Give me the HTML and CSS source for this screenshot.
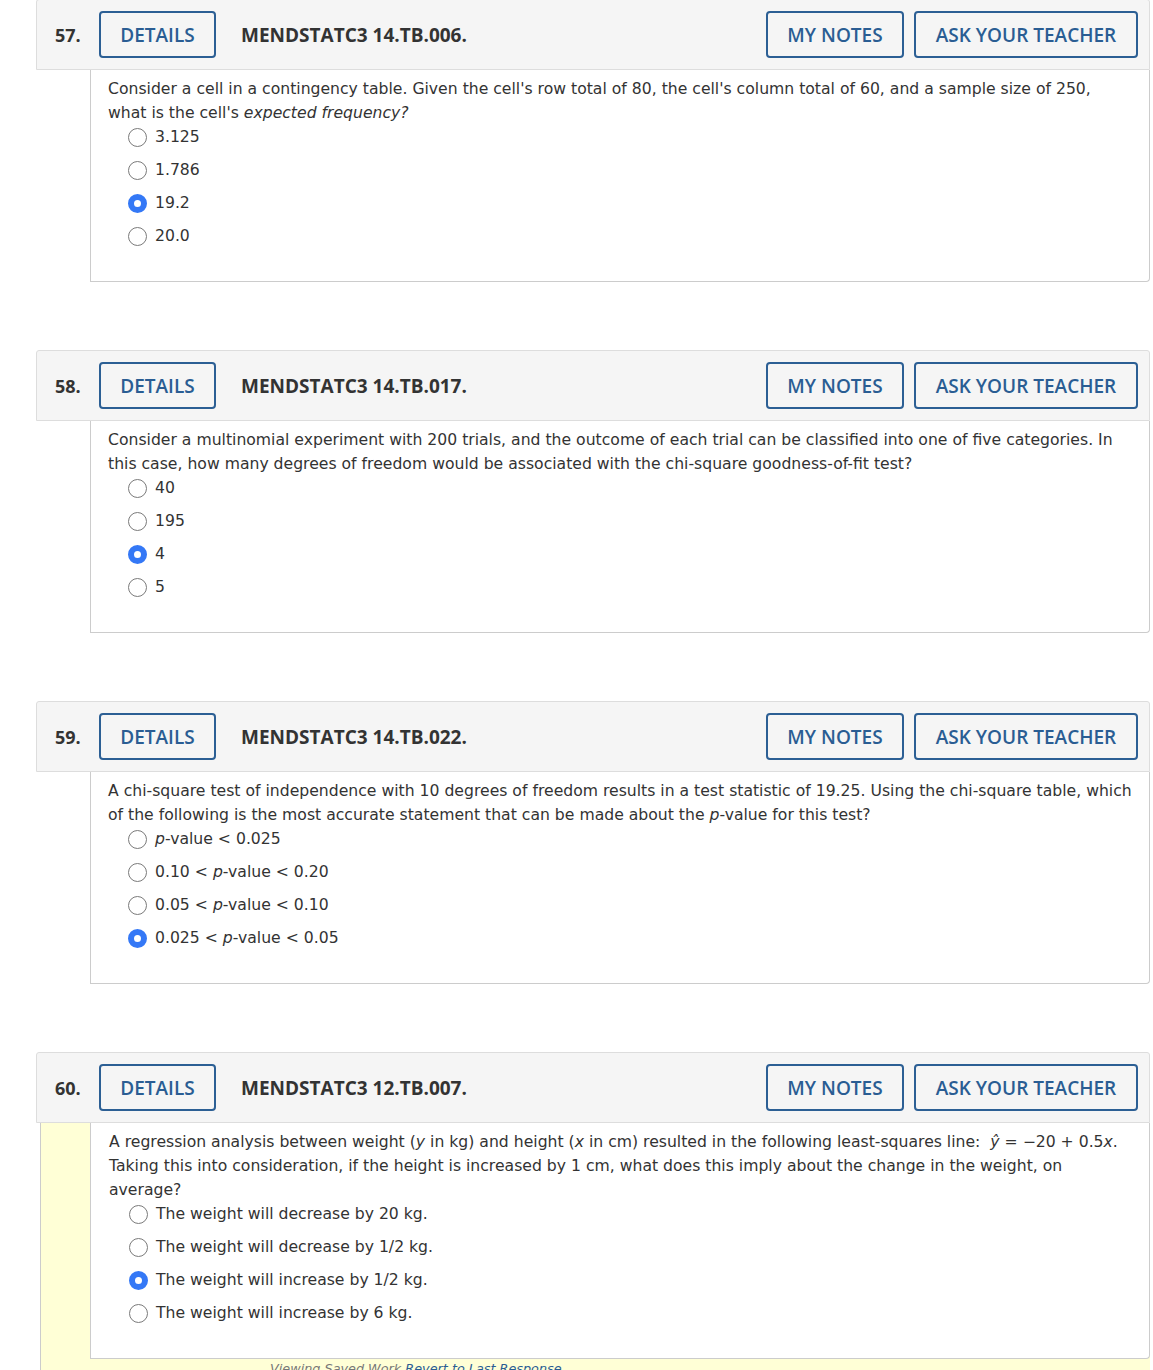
FILE: index.html
```html
<!DOCTYPE html>
<html>
<head>
<meta charset="utf-8">
<link rel="stylesheet" href="styles.css">
</head>
<body>
<div class="page">

  <section class="question">
    <div class="q-head">
      <span class="q-num">57.</span>
      <button class="btn btn-details">DETAILS</button>
      <span class="q-title">MENDSTATC3 14.TB.006.</span>
      <span class="spacer"></span>
      <button class="btn btn-notes">MY NOTES</button>
      <button class="btn btn-ask">ASK YOUR TEACHER</button>
    </div>
    <div class="q-body">
      <p class="q-text">Consider a cell in a contingency table. Given the cell's row total of 80, the cell's column total of 60, and a sample size of 250, what is the cell's <i>expected frequency?</i></p>
      <ul class="opts">
        <li><span class="radio"></span>3.125</li>
        <li><span class="radio"></span>1.786</li>
        <li><span class="radio checked"></span>19.2</li>
        <li><span class="radio"></span>20.0</li>
      </ul>
    </div>
  </section>

  <section class="question">
    <div class="q-head">
      <span class="q-num">58.</span>
      <button class="btn btn-details">DETAILS</button>
      <span class="q-title">MENDSTATC3 14.TB.017.</span>
      <span class="spacer"></span>
      <button class="btn btn-notes">MY NOTES</button>
      <button class="btn btn-ask">ASK YOUR TEACHER</button>
    </div>
    <div class="q-body">
      <p class="q-text">Consider a multinomial experiment with 200 trials, and the outcome of each trial can be classified into one of five categories. In this case, how many degrees of freedom would be associated with the chi-square goodness-of-fit test?</p>
      <ul class="opts">
        <li><span class="radio"></span>40</li>
        <li><span class="radio"></span>195</li>
        <li><span class="radio checked"></span>4</li>
        <li><span class="radio"></span>5</li>
      </ul>
    </div>
  </section>

  <section class="question">
    <div class="q-head">
      <span class="q-num">59.</span>
      <button class="btn btn-details">DETAILS</button>
      <span class="q-title">MENDSTATC3 14.TB.022.</span>
      <span class="spacer"></span>
      <button class="btn btn-notes">MY NOTES</button>
      <button class="btn btn-ask">ASK YOUR TEACHER</button>
    </div>
    <div class="q-body">
      <p class="q-text">A chi-square test of independence with 10 degrees of freedom results in a test statistic of 19.25. Using the chi-square table, which of the following is the most accurate statement that can be made about the <i>p</i>-value for this test?</p>
      <ul class="opts">
        <li><span class="radio"></span><i>p</i>-value &lt; 0.025</li>
        <li><span class="radio"></span>0.10 &lt;&nbsp;<i>p</i>-value &lt; 0.20</li>
        <li><span class="radio"></span>0.05 &lt;&nbsp;<i>p</i>-value &lt; 0.10</li>
        <li><span class="radio checked"></span>0.025 &lt;&nbsp;<i>p</i>-value &lt; 0.05</li>
      </ul>
    </div>
  </section>

  <section class="question">
    <div class="q-head">
      <span class="q-num">60.</span>
      <button class="btn btn-details">DETAILS</button>
      <span class="q-title">MENDSTATC3 12.TB.007.</span>
      <span class="spacer"></span>
      <button class="btn btn-notes">MY NOTES</button>
      <button class="btn btn-ask">ASK YOUR TEACHER</button>
    </div>
    <div class="saved">
      <div class="q-body">
        <p class="q-text">A regression analysis between weight (<i>y</i> in kg) and height (<i>x</i> in cm) resulted in the following least-squares line:&nbsp; <i>ŷ</i> = −20 + 0.5<i>x</i>. Taking this into consideration, if the height is increased by 1 cm, what does this imply about the change in the weight, on average?</p>
        <ul class="opts">
          <li><span class="radio"></span>The weight will decrease by 20 kg.</li>
          <li><span class="radio"></span>The weight will decrease by 1/2 kg.</li>
          <li><span class="radio checked"></span>The weight will increase by 1/2 kg.</li>
          <li><span class="radio"></span>The weight will increase by 6 kg.</li>
        </ul>
      </div>
      <div class="saved-note"><i>Viewing Saved Work</i> <a href="#" class="revert">Revert to Last Response</a></div>
    </div>
  </section>

</div>
</body>
</html>
```

FILE: styles.css
```css
html, body {
  margin: 0;
  padding: 0;
  background: #ffffff;
}

.page {
  margin-top: -1px;
  margin-left: 36px;
  width: 1114px;
  display: flex;
  flex-direction: column;
  gap: 68px;
}

.question {
  display: flex;
  flex-direction: column;
}

.q-head {
  box-sizing: border-box;
  height: 71px;
  display: flex;
  align-items: center;
  padding: 0 11px 0 18px;
  background: #f5f5f5;
  border: 1px solid #dddddd;
  border-radius: 3px 3px 0 0;
  font-family: "Open Sans", "Liberation Sans", sans-serif;
  color: #333333;
}

.q-num {
  font-size: 18px;
  font-weight: 700;
  width: 44px;
}

.q-title {
  font-size: 19px;
  font-weight: 700;
  margin-left: 25px;
}

.spacer {
  flex: 1;
}

.btn {
  box-sizing: border-box;
  height: 47px;
  background: transparent;
  border: 2px solid #2c5f94;
  border-radius: 4px;
  color: #2a5d93;
  font-family: "Open Sans", "Liberation Sans", sans-serif;
  font-size: 19px;
  font-weight: 600;
  padding: 0 10px;
  cursor: pointer;
}

.btn-details {
  width: 117px;
}

.btn-notes {
  width: 138px;
  margin-right: 10px;
}

.btn-ask {
  width: 224px;
}

.q-body {
  box-sizing: border-box;
  margin-left: 54px;
  background: #ffffff;
  border: 1px solid #cccccc;
  border-top: none;
  border-radius: 0 0 4px 0;
  padding: 7px 17px 33px 17px;
  font-family: "DejaVu Sans", Verdana, sans-serif;
  font-size: 15.65px;
  color: #333333;
}

.q-text {
  margin: 0;
  line-height: 24px;
}

.opts {
  list-style: none;
  margin: 0;
  padding: 0 0 0 20px;
  display: flex;
  flex-direction: column;
  gap: 9px;
}

.opts li {
  display: flex;
  align-items: center;
  height: 24px;
  line-height: 24px;
}

.radio {
  box-sizing: border-box;
  width: 19px;
  height: 19px;
  border-radius: 50%;
  border: 1.5px solid #7a7a7a;
  background: #ffffff;
  margin-right: 8px;
  flex: none;
}

.radio.checked {
  border: 6px solid #3478f6;
  background: #ffffff;
}

.saved {
  margin-left: 4px;
  background: #ffffd6;
  border-left: 1px solid #cccccc;
  display: flex;
  flex-direction: column;
}

.saved .q-body {
  margin-left: 49px;
  padding-left: 18px;
  padding-right: 17px;
}

.saved-note {
  padding: 0 0 0 229px;
  font-family: "DejaVu Sans", Verdana, sans-serif;
  font-size: 12.8px;
  line-height: 20px;
  color: #777777;
  height: 40px;
}

.revert {
  color: #2a5d93;
  font-style: italic;
  text-decoration: none;
}
```
